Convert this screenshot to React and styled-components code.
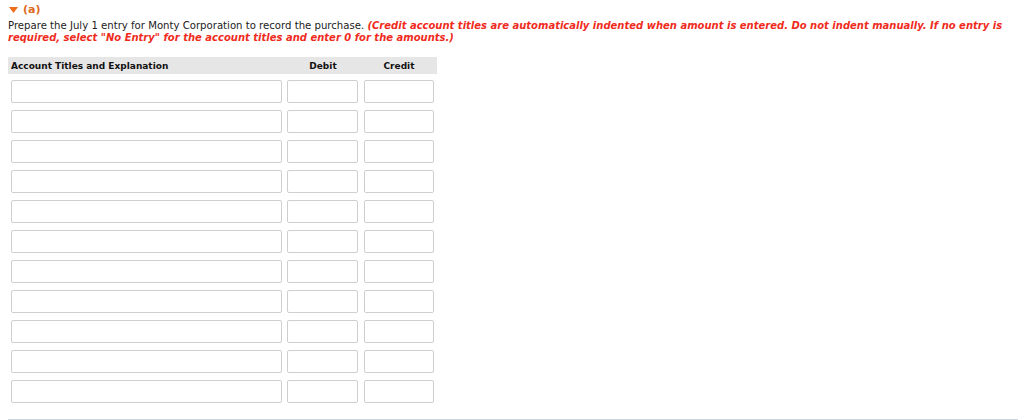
import React from "react";
import styled, { createGlobalStyle } from "styled-components";

const Global = createGlobalStyle`
  html, body { margin: 0; padding: 0; background: #fff; }
  body { font-family: "DejaVu Sans", Verdana, sans-serif; color: #222; }
`;

const Page = styled.div`
  width: 1024px;
  height: 420px;
  padding: 3px 7px 0 8px;
  box-sizing: border-box;
  display: flex;
  flex-direction: column;
  overflow: hidden;
`;

const PartHeader = styled.div`
  display: flex;
  align-items: center;
  gap: 5px;
  height: 13px;
  color: #dd6a22;
  font-size: 11px;
  font-weight: bold;
`;

const Caret = styled.svg`
  width: 9px;
  height: 6px;
  margin-left: 1px;
`;

const Prompt = styled.p`
  margin: 4px 0 0;
  font-size: 10.15px;
  line-height: 12px;
  color: #222;
`;

const Warn = styled.em`
  color: #f02b1d;
  font-weight: bold;
  font-size: 10px;
`;

const Table = styled.div`
  margin-top: 13px;
  width: 429px;
  display: flex;
  flex-direction: column;
`;

const HeadRow = styled.div`
  display: grid;
  grid-template-columns: 277px 76px 76px;
  height: 17px;
  align-items: center;
  background: #e6e6e6;
  font-size: 9px;
  font-weight: bold;
  color: #111;
`;

const HeadCell = styled.div`
  text-align: ${(p) => (p.$center ? "center" : "left")};
  padding-left: ${(p) => (p.$center ? "0" : "3px")};
`;

const Rows = styled.div`
  display: flex;
  flex-direction: column;
  gap: 7px;
  padding: 6px 0 0 3px;
`;

const Row = styled.div`
  display: flex;
  gap: 5px;
`;

const Field = styled.div`
  width: ${(p) => p.$w}px;
  height: 23px;
  box-sizing: border-box;
  border: 1px solid #cfcfcf;
  border-radius: 2px;
  background: #fff;
  margin-right: ${(p) => p.$mr || 0}px;
`;

const Spacer = styled.div`
  flex: 1;
`;

const Rule = styled.div`
  height: 1px;
  background: #cdd5da;
  width: 1010px;
`;

export default function App() {
  const rows = Array.from({ length: 11 });
  return (
    <>
      <Global />
      <Page>
        <PartHeader>
          <Caret viewBox="0 0 9 6">
            <polygon points="0,0 9,0 4.5,6" fill="#ef6c1a" />
          </Caret>
          <span>(a)</span>
        </PartHeader>
        <Prompt>
          Prepare the July 1 entry for Monty Corporation to record the purchase.{" "}
          <Warn>
            (Credit account titles are automatically indented when amount is entered. Do not indent manually. If no entry is
            required, select "No Entry" for the account titles and enter 0 for the amounts.)
          </Warn>
        </Prompt>
        <Table>
          <HeadRow>
            <HeadCell>Account Titles and Explanation</HeadCell>
            <HeadCell $center>Debit</HeadCell>
            <HeadCell $center>Credit</HeadCell>
          </HeadRow>
          <Rows>
            {rows.map((_, i) => (
              <Row key={i}>
                <Field $w={271} />
                <Field $w={71} $mr={1} />
                <Field $w={70} />
              </Row>
            ))}
          </Rows>
        </Table>
        <Spacer />
        <Rule />
      </Page>
    </>
  );
}
